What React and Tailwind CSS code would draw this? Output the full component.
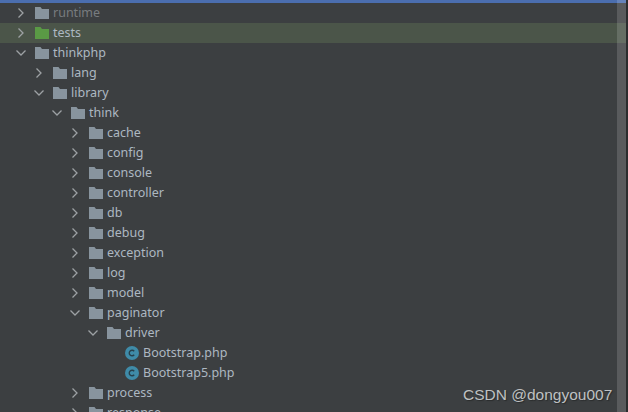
const rows = [
  ["runtime", 0, "r", "folder", "muted"],
  ["tests", 0, "r", "green", "sel"],
  ["thinkphp", 0, "d", "folder"],
  ["lang", 1, "r", "folder"],
  ["library", 1, "d", "folder"],
  ["think", 2, "d", "folder"],
  ["cache", 3, "r", "folder"],
  ["config", 3, "r", "folder"],
  ["console", 3, "r", "folder"],
  ["controller", 3, "r", "folder"],
  ["db", 3, "r", "folder"],
  ["debug", 3, "r", "folder"],
  ["exception", 3, "r", "folder"],
  ["log", 3, "r", "folder"],
  ["model", 3, "r", "folder"],
  ["paginator", 3, "d", "folder"],
  ["driver", 4, "d", "folder"],
  ["Bootstrap.php", 5, null, "class"],
  ["Bootstrap5.php", 5, null, "class"],
  ["process", 3, "r", "folder"],
  ["response", 3, "r", "folder"],
];

const indents = ["w-[15px]", "w-[33px]", "w-[51px]", "w-[69px]", "w-[87px]", "w-[105px]"];

function Chevron({ dir }) {
  return (
    <svg width="12" height="12" viewBox="0 0 12 12" fill="none" stroke="#9da1a4" strokeWidth="1.3" className="shrink-0">
      {dir === "r" ? <path d="M3.5 1.5 8 6 3.5 10.5" /> : <path d="M1.5 3.5 6 8 10.5 3.5" />}
    </svg>
  );
}

function Folder({ color }) {
  return (
    <svg width="14" height="12" viewBox="0 0 14 12" className="shrink-0">
      <path d="M0 0H5.5L7 2H14V12H0Z" fill={color} />
    </svg>
  );
}

function ClassIcon() {
  return (
    <svg width="14" height="14" viewBox="0 0 14 14" className="shrink-0">
      <circle cx="7" cy="7" r="7" fill="#3f8ba8" />
      <path d="M9.2 5.2A2.8 2.8 0 1 0 9.2 8.8" fill="none" stroke="#27414d" strokeWidth="1.4" />
    </svg>
  );
}

function Row({ name, depth, chevron, icon, tone }) {
  const bg = tone === "sel" ? "bg-[#4b5549]" : "";
  const text = tone === "muted" ? "text-[#787c7f]" : "text-[#adb8c1]";
  return (
    <div className={`flex h-5 shrink-0 items-center ${bg}`}>
      <div className={`shrink-0 ${indents[depth]}`} />
      <div className="flex w-5 shrink-0 items-center">
        {chevron && <Chevron dir={chevron} />}
      </div>
      {icon === "class" ? <ClassIcon /> : <Folder color={icon === "green" ? "#5a9a45" : "#88949e"} />}
      <span className={`ml-1 whitespace-nowrap text-[12.5px] ${text}`}>{name}</span>
    </div>
  );
}

export default function App() {
  return (
    <div className="relative flex h-[412px] w-[628px] overflow-hidden bg-[#2b2d2e] font-['Noto_Sans',sans-serif]">
      <div className="flex h-full w-[626px] shrink-0 flex-col bg-[#3c3f41]">
        <div className="h-[3px] shrink-0 bg-[#4b6eaf]" />
        {rows.map((r) => (
          <Row key={r[0]} name={r[0]} depth={r[1]} chevron={r[2]} icon={r[3]} tone={r[4]} />
        ))}
      </div>
      <div className="absolute right-[2px] top-0 h-full w-[9px] bg-white/15" />
      <span className="absolute left-[463px] top-[383px] whitespace-nowrap font-['Liberation_Sans',sans-serif] text-[15.5px] text-[#bfc1c2] [text-shadow:1px_1px_1px_#2a2c2d]">
        CSDN @dongyou007
      </span>
    </div>
  );
}
